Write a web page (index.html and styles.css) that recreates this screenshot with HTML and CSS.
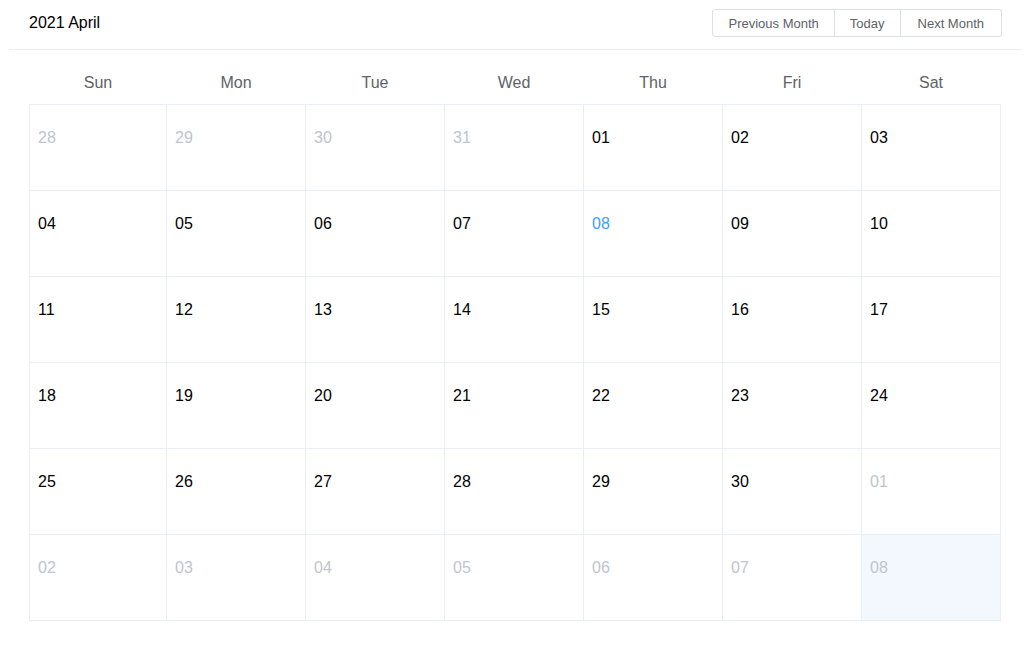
FILE: index.html
```html
<!DOCTYPE html>
<html>
<head>
<meta charset="utf-8">
<link rel="stylesheet" href="styles.css">
</head>
<body>
<div class="page">
  <div class="calendar">
    <div class="cal-header">
      <div class="cal-title">2021 April</div>
      <div class="btn-group">
        <button class="btn">Previous Month</button><button class="btn">Today</button><button class="btn btn-next">Next Month</button>
      </div>
    </div>
    <div class="cal-body">
      <table class="cal-table">
        <colgroup>
          <col class="col-first"><col><col><col><col><col><col>
        </colgroup>
        <thead>
          <tr><th>Sun</th><th>Mon</th><th>Tue</th><th>Wed</th><th>Thu</th><th>Fri</th><th>Sat</th></tr>
        </thead>
        <tbody>
          <tr>
            <td class="other"><div class="day">28</div></td>
            <td class="other"><div class="day">29</div></td>
            <td class="other"><div class="day">30</div></td>
            <td class="other"><div class="day">31</div></td>
            <td><div class="day">01</div></td>
            <td><div class="day">02</div></td>
            <td><div class="day">03</div></td>
          </tr>
          <tr>
            <td><div class="day">04</div></td>
            <td><div class="day">05</div></td>
            <td><div class="day">06</div></td>
            <td><div class="day">07</div></td>
            <td class="today"><div class="day">08</div></td>
            <td><div class="day">09</div></td>
            <td><div class="day">10</div></td>
          </tr>
          <tr>
            <td><div class="day">11</div></td>
            <td><div class="day">12</div></td>
            <td><div class="day">13</div></td>
            <td><div class="day">14</div></td>
            <td><div class="day">15</div></td>
            <td><div class="day">16</div></td>
            <td><div class="day">17</div></td>
          </tr>
          <tr>
            <td><div class="day">18</div></td>
            <td><div class="day">19</div></td>
            <td><div class="day">20</div></td>
            <td><div class="day">21</div></td>
            <td><div class="day">22</div></td>
            <td><div class="day">23</div></td>
            <td><div class="day">24</div></td>
          </tr>
          <tr>
            <td><div class="day">25</div></td>
            <td><div class="day">26</div></td>
            <td><div class="day">27</div></td>
            <td><div class="day">28</div></td>
            <td><div class="day">29</div></td>
            <td><div class="day">30</div></td>
            <td class="other"><div class="day">01</div></td>
          </tr>
          <tr>
            <td class="other"><div class="day">02</div></td>
            <td class="other"><div class="day">03</div></td>
            <td class="other"><div class="day">04</div></td>
            <td class="other"><div class="day">05</div></td>
            <td class="other"><div class="day">06</div></td>
            <td class="other"><div class="day">07</div></td>
            <td class="other selected"><div class="day">08</div></td>
          </tr>
        </tbody>
      </table>
    </div>
  </div>
</div>
</body>
</html>
```

FILE: styles.css
```css
html, body {
  margin: 0;
  padding: 0;
  background: #fff;
}

body {
  font-family: "Liberation Sans", Arial, Helvetica, sans-serif;
  color: #000;
}

.page {
  padding-left: 9px;
}

.calendar {
  width: 1013px;
  background: #fff;
}

.cal-header {
  display: flex;
  justify-content: space-between;
  align-items: center;
  padding: 9px 20px 12px 20px;
  border-bottom: 1px solid #ebeef5;
}

.cal-title {
  font-size: 16px;
  line-height: 18px;
  color: #000;
}

.btn-group {
  display: flex;
}

.btn {
  font-family: "Liberation Sans", Arial, Helvetica, sans-serif;
  font-size: 13px;
  line-height: 12px;
  padding: 8px 15px 6px 15px;
  margin: 0;
  color: #606266;
  background: #fff;
  border: 1px solid #dcdfe6;
  border-radius: 0;
  height: 28px;
  box-sizing: border-box;
  cursor: pointer;
}

.btn + .btn {
  border-left: none;
}

.btn:first-child {
  border-radius: 3px 0 0 3px;
}

.btn:last-child {
  border-radius: 0 3px 3px 0;
}

.btn-next {
  padding-left: 17px;
  padding-right: 17px;
}

.cal-body {
  padding: 12px 20px 35px 20px;
}

.cal-table {
  width: 972px;
  table-layout: fixed;
  border-collapse: collapse;
}

.col-first {
  width: 137px;
}

.cal-table th {
  padding: 12px 0;
  font-size: 16px;
  line-height: 18px;
  font-weight: 400;
  color: #606266;
  text-align: center;
}

.cal-table td {
  border: 1px solid #ebeef5;
  padding: 0;
  vertical-align: top;
  color: #000;
}

.cal-table td.other {
  color: #c0c4cc;
}

.cal-table td.today {
  color: #409eff;
}

.cal-table td.selected {
  background: #f2f8fe;
}

.day {
  box-sizing: border-box;
  height: 85px;
  padding: 24px 8px 8px 8px;
  font-size: 16px;
  line-height: 18px;
}
```
